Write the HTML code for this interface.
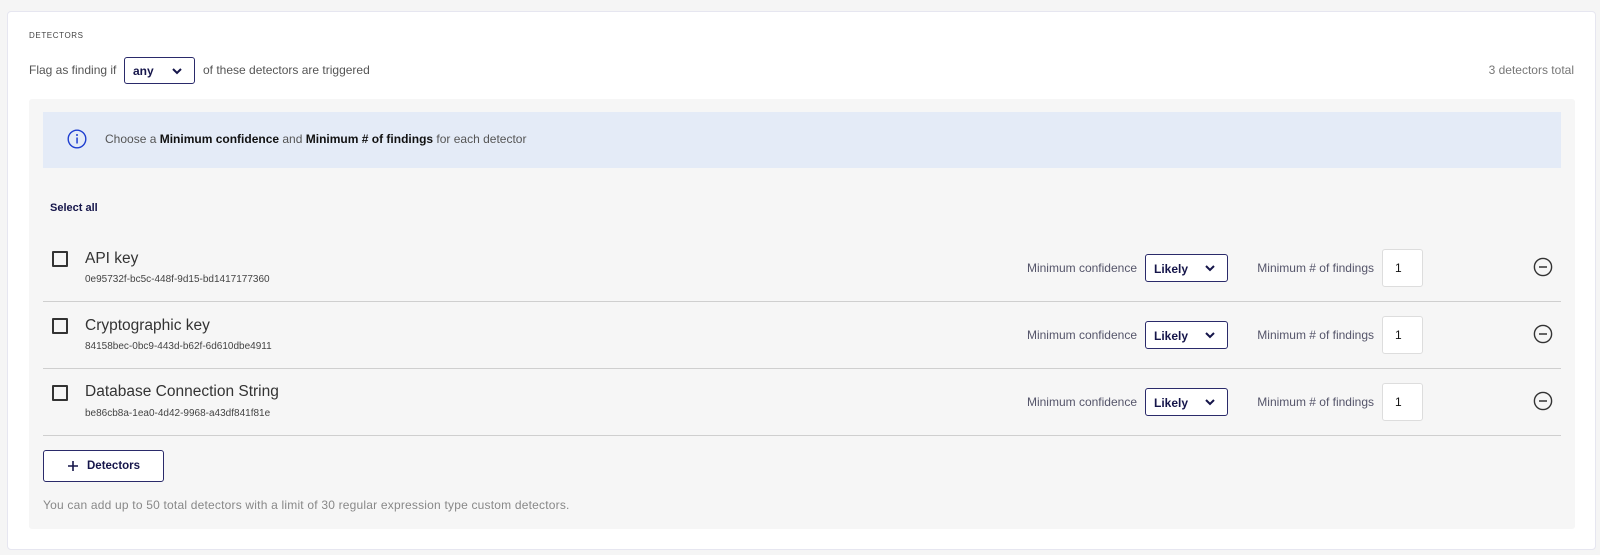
<!DOCTYPE html>
<html><head><style>
*{box-sizing:border-box;margin:0;padding:0}
body{width:1600px;height:555px;background:#f5f5f5;font-family:"Liberation Sans",sans-serif;color:#3a3a48;position:relative;overflow:hidden}
.abs{position:absolute}
.t{line-height:20px;height:20px;white-space:nowrap}
.card{left:7px;top:11px;width:1589px;height:539px;background:#fff;border:1px solid #e6e6f0;border-radius:4px}
.panel{left:29px;top:99px;width:1546px;height:430px;background:#f6f6f6;border-radius:3px}
.banner{left:43px;top:112px;width:1518px;height:56px;background:#e4ebf7}
.sel{border:1px solid #2a2a6a;border-radius:3px;background:#fff;color:#15154a;font-weight:bold;font-size:12px;line-height:28px;padding-left:8px}
.sel svg{position:absolute;right:12px;top:50%;margin-top:-3px}
.lbl{font-size:12px;color:#55556a;text-align:right}
.num{background:#fff;border:1px solid #ddd;border-radius:3px;font-size:12px;color:#111;padding-left:12px;line-height:37px}
.sep{left:43px;width:1518px;height:1px;background:#cfcfcf}
.cb{width:16px;height:16px;border:2px solid #333;border-radius:1px}
.title{font-size:15.5px;color:#333}
.id{font-size:10px;color:#444}
</style></head><body>
<div class="abs card"></div>
<div class="abs t" style="left:29px;top:26px;font-size:8px;letter-spacing:.6px;color:#444">DETECTORS</div>
<div class="abs t" style="left:29px;top:60px;font-size:12px;color:#555">Flag as finding if</div>
<div class="abs sel" style="left:124px;top:57px;width:71px;height:27px;line-height:27px">any<svg width="10" height="7" viewBox="0 0 10 7"><path d="M1 1l4 4 4-4" fill="none" stroke="#15154a" stroke-width="2"/></svg></div>
<div class="abs t" style="left:203px;top:60px;font-size:12px;color:#555">of these detectors are triggered</div>
<div class="abs t" style="right:26px;top:60px;font-size:12px;color:#777">3 detectors total</div>
<div class="abs panel"></div>
<div class="abs banner"></div>
<svg class="abs" style="left:67px;top:129px" width="20" height="20" viewBox="0 0 20 20"><circle cx="10" cy="10" r="8.8" fill="none" stroke="#1f3fd0" stroke-width="1.4"/><rect x="9.3" y="8.5" width="1.5" height="6" fill="#1f3fd0"/><circle cx="10" cy="6" r="1" fill="#1f3fd0"/></svg>
<div class="abs t" style="left:105px;top:129px;font-size:12px;color:#555">Choose a <b style="color:#111">Minimum confidence</b> and <b style="color:#111">Minimum # of findings</b> for each detector</div>
<div class="abs t" style="left:50px;top:198px;font-size:11px;font-weight:bold;color:#15154a">Select all</div>

<div class="abs cb" style="left:52px;top:251px"></div>
<div class="abs t title" style="left:85px;top:249px">API key</div>
<div class="abs t id" style="left:85px;top:270px">0e95732f-bc5c-448f-9d15-bd1417177360</div>
<div class="abs sep" style="top:301px"></div>
<div class="abs cb" style="left:52px;top:318px"></div>
<div class="abs t title" style="left:85px;top:316px">Cryptographic key</div>
<div class="abs t id" style="left:85px;top:337px">84158bec-0bc9-443d-b62f-6d610dbe4911</div>
<div class="abs sep" style="top:368px"></div>
<div class="abs cb" style="left:52px;top:385px"></div>
<div class="abs t title" style="left:85px;top:382px">Database Connection String</div>
<div class="abs t id" style="left:85px;top:404px">be86cb8a-1ea0-4d42-9968-a43df841f81e</div>
<div class="abs sep" style="top:435px"></div>

<div class="abs t lbl" style="right:463px;top:258px">Minimum confidence</div>
<div class="abs sel" style="left:1145px;top:254px;width:83px;height:28px">Likely<svg width="10" height="7" viewBox="0 0 10 7"><path d="M1 1l4 4 4-4" fill="none" stroke="#15154a" stroke-width="2"/></svg></div>
<div class="abs t lbl" style="right:226px;top:258px">Minimum # of findings</div>
<div class="abs num" style="left:1382px;top:249px;width:41px;height:38px">1</div>
<svg class="abs" style="left:1533px;top:257px" width="20" height="20" viewBox="0 0 20 20"><circle cx="10" cy="10" r="8.6" fill="none" stroke="#333" stroke-width="1.4"/><path d="M6 10h8" stroke="#333" stroke-width="1.5"/></svg>

<div class="abs t lbl" style="right:463px;top:325px">Minimum confidence</div>
<div class="abs sel" style="left:1145px;top:321px;width:83px;height:28px">Likely<svg width="10" height="7" viewBox="0 0 10 7"><path d="M1 1l4 4 4-4" fill="none" stroke="#15154a" stroke-width="2"/></svg></div>
<div class="abs t lbl" style="right:226px;top:325px">Minimum # of findings</div>
<div class="abs num" style="left:1382px;top:316px;width:41px;height:38px">1</div>
<svg class="abs" style="left:1533px;top:324px" width="20" height="20" viewBox="0 0 20 20"><circle cx="10" cy="10" r="8.6" fill="none" stroke="#333" stroke-width="1.4"/><path d="M6 10h8" stroke="#333" stroke-width="1.5"/></svg>

<div class="abs t lbl" style="right:463px;top:392px">Minimum confidence</div>
<div class="abs sel" style="left:1145px;top:388px;width:83px;height:28px">Likely<svg width="10" height="7" viewBox="0 0 10 7"><path d="M1 1l4 4 4-4" fill="none" stroke="#15154a" stroke-width="2"/></svg></div>
<div class="abs t lbl" style="right:226px;top:392px">Minimum # of findings</div>
<div class="abs num" style="left:1382px;top:383px;width:41px;height:38px">1</div>
<svg class="abs" style="left:1533px;top:391px" width="20" height="20" viewBox="0 0 20 20"><circle cx="10" cy="10" r="8.6" fill="none" stroke="#333" stroke-width="1.4"/><path d="M6 10h8" stroke="#333" stroke-width="1.5"/></svg>

<div class="abs" style="left:43px;top:450px;width:121px;height:32px;background:#fff;border:1px solid #2a2a6a;border-radius:3px"></div>
<svg class="abs" style="left:68px;top:461px" width="10" height="10" viewBox="0 0 10 10"><path d="M5 0v10M0 5h10" stroke="#15154a" stroke-width="1.6"/></svg>
<div class="abs t" style="left:87px;top:456px;font-size:11.5px;font-weight:bold;color:#15154a">Detectors</div>
<div class="abs t" style="left:43px;top:495px;font-size:12px;letter-spacing:.2px;color:#888">You can add up to 50 total detectors with a limit of 30 regular expression type custom detectors.</div>
</body></html>
